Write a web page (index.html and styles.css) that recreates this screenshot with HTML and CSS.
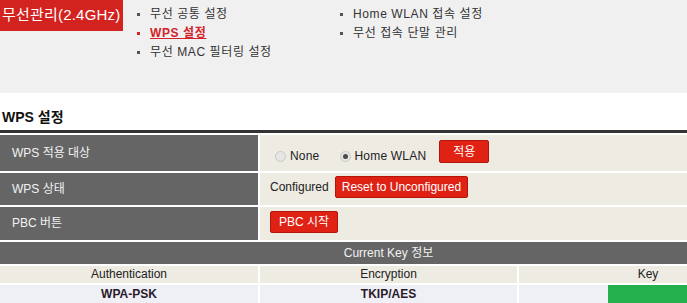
FILE: index.html
```html
<!DOCTYPE html>
<html lang="ko">
<head>
<meta charset="utf-8">
<title>WPS 설정</title>
<link rel="stylesheet" href="styles.css">
</head>
<body>
<div class="page">
  <div class="top">
    <div class="cat">무선관리(2.4GHz)</div>
    <ul class="menu menu-a">
      <li>무선 공통 설정</li>
      <li class="active"><a>WPS 설정</a></li>
      <li>무선 MAC 필터링 설정</li>
    </ul>
    <ul class="menu menu-b">
      <li>Home WLAN 접속 설정</li>
      <li>무선 접속 단말 관리</li>
    </ul>
  </div>
  <h2 class="title">WPS 설정</h2>
  <div class="grid">
    <div class="lbl r1">WPS 적용 대상</div>
    <div class="val r1 v-target">
      <label class="radio"><span class="dot"></span>None</label>
      <label class="radio second"><span class="dot on"></span>Home WLAN</label>
      <button class="btn apply">적용</button>
    </div>
    <div class="lbl r2">WPS 상태</div>
    <div class="val r2 v-state">
      <span class="state">Configured</span>
      <button class="btn reset">Reset to Unconfigured</button>
    </div>
    <div class="lbl r3">PBC 버튼</div>
    <div class="val r3 v-pbc">
      <button class="btn pbc">PBC 시작</button>
    </div>
    <div class="head">Current Key 정보</div>
    <div class="th">Authentication</div>
    <div class="th">Encryption</div>
    <div class="th">Key</div>
    <div class="td">WPA-PSK</div>
    <div class="td">TKIP/AES</div>
    <div class="td key"><span class="keybox"></span></div>
  </div>
</div>
</body>
</html>
```

FILE: styles.css
```css
html, body {
  margin: 0;
  padding: 0;
  background: #ffffff;
}
.page {
  width: 687px;
  height: 303px;
  overflow: hidden;
  font-family: "Liberation Sans", "Noto Sans CJK KR", sans-serif;
  font-size: 12px;
  color: #333;
}
.top {
  display: flex;
  align-items: flex-start;
  height: 93px;
  background: #f0f0f0;
}
.cat {
  width: 123px;
  height: 31px;
  background: #d3231f;
  color: #fff;
  font-size: 15px;
  line-height: 29px;
  padding-left: 2px;
  box-sizing: border-box;
  white-space: nowrap;
  letter-spacing: 0.2px;
}
.menu {
  list-style: none;
  margin: 0;
  padding: 5px 0 0 0;
}
.menu-a {
  margin-left: 14px;
  width: 203px;
}
.menu li {
  display: flex;
  align-items: center;
  height: 19px;
  line-height: 19px;
  color: #333;
  white-space: nowrap;
  letter-spacing: 0.6px;
}
.menu li::before {
  content: "";
  width: 3px;
  height: 3px;
  background: #555;
  margin-right: 10px;
  flex: none;
}
.menu li.active::before {
  background: #d3232a;
}
.menu li.active a {
  color: #d3232a;
  font-weight: bold;
  text-decoration: underline;
}
.title {
  margin: 0;
  padding: 14px 0 3px 2px;
  height: 20px;
  line-height: 20px;
  font-size: 14px;
  font-weight: bold;
  color: #111;
  border-bottom: 3px solid #333;
}
.grid {
  display: grid;
  grid-template-columns: 258px 257px 258px;
  grid-template-rows: 36px 32px 33px 22px 17px 20px;
  gap: 2px;
  margin-top: 2px;
  width: 777px;
}
.lbl {
  background: #656565;
  color: #f2f2f2;
  padding: 0 0 4px 12px;
  display: flex;
  align-items: center;
  white-space: nowrap;
}
.val {
  grid-column: span 2;
  background: #eeebe2;
  display: flex;
  padding-left: 10px;
  color: #222;
  white-space: nowrap;
}
.v-target {
  align-items: flex-end;
  padding: 0 0 8px 15px;
}
.radio {
  display: flex;
  align-items: center;
  line-height: 14px;
  letter-spacing: 0.2px;
  color: #222;
}
.radio.second {
  margin-left: 20px;
}
.dot {
  width: 11px;
  height: 11px;
  box-sizing: border-box;
  border-radius: 50%;
  border: 1px solid #c9c9c9;
  background: #e6e6e6;
  margin-right: 4px;
  display: flex;
  align-items: center;
  justify-content: center;
}
.dot.on::after {
  content: "";
  width: 5px;
  height: 5px;
  border-radius: 50%;
  background: #4a4a4a;
}
.btn {
  font-family: "Liberation Sans", "Noto Sans CJK KR", sans-serif;
  font-size: 12px;
  color: #fff;
  background: #df2214;
  border: 1px solid #b3150b;
  border-radius: 2px;
  height: 22px;
  line-height: 20px;
  padding: 0 6px;
  margin: 0;
}
.apply {
  height: 23px;
  padding: 0 13px;
  margin-left: 13px;
}
.v-state {
  align-items: flex-start;
  padding-top: 3px;
}
.state {
  line-height: 22px;
  margin-right: 6px;
}
.v-pbc {
  align-items: flex-start;
  padding-top: 4px;
}
.pbc {
  padding: 0 8px;
}
.head {
  grid-column: 1 / -1;
  background: #656565;
  color: #f2f2f2;
  text-align: center;
  line-height: 22px;
}
.th {
  background: #eeebe2;
  color: #222;
  text-align: center;
  line-height: 17px;
}
.td {
  background: #eef0f5;
  color: #2b1b2b;
  font-weight: bold;
  text-align: center;
  line-height: 18px;
}
.td.key {
  text-align: left;
  display: flex;
}
.keybox {
  margin-left: 89px;
  width: 90px;
  background: #22b14c;
}
```
